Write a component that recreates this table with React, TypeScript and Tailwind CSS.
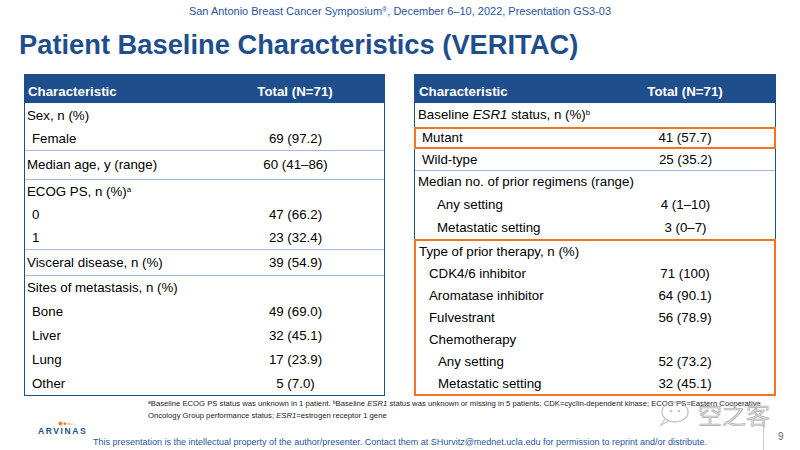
import type { ReactNode } from 'react'

type Row = { label: ReactNode; value?: string; h: string; pl: string }

function TableRow({ row, mr }: { row: Row; mr: string }) {
  return (
    <div className={`flex items-center ${row.h}`}>
      <div className={`flex-1 whitespace-nowrap ${row.pl}`}>{row.label}</div>
      <div className={`w-[120px] text-center ${mr}`}>{row.value}</div>
    </div>
  )
}

function Header({ mr, pl }: { mr: string; pl: string }) {
  return (
    <div className="flex h-[29px] items-center bg-[#1f4e8c] pt-[6px] font-bold text-white">
      <div className={`flex-1 ${pl}`}>Characteristic</div>
      <div className={`w-[120px] text-center ${mr}`}>Total (N=71)</div>
    </div>
  )
}

const leftGroups: Row[][] = [
  [
    { label: 'Sex, n (%)', h: 'h-[25px]', pl: 'pl-[2px]' },
    { label: 'Female', value: '69 (97.2)', h: 'h-[22px]', pl: 'pl-[7px]' },
  ],
  [{ label: 'Median age, y (range)', value: '60 (41–86)', h: 'h-[28px]', pl: 'pl-[2px]' }],
  [
    {
      label: (
        <>
          ECOG PS, n (%)<sup className="text-[8px]">a</sup>
        </>
      ),
      h: 'h-[23px]',
      pl: 'pl-[2px]',
    },
    { label: '0', value: '47 (66.2)', h: 'h-[24px]', pl: 'pl-[7px]' },
    { label: '1', value: '23 (32.4)', h: 'h-[22px]', pl: 'pl-[7px]' },
  ],
  [{ label: 'Visceral disease, n (%)', value: '39 (54.9)', h: 'h-[25px]', pl: 'pl-[2px]' }],
  [
    { label: 'Sites of metastasis, n (%)', h: 'h-[24px]', pl: 'pl-[2px]' },
    { label: 'Bone', value: '49 (69.0)', h: 'h-[24px]', pl: 'pl-[7px]' },
    { label: 'Liver', value: '32 (45.1)', h: 'h-[24px]', pl: 'pl-[7px]' },
    { label: 'Lung', value: '17 (23.9)', h: 'h-[24px]', pl: 'pl-[7px]' },
    { label: 'Other', value: '5 (7.0)', h: 'h-[23px]', pl: 'pl-[7px]' },
  ],
]

const mutant: Row = { label: 'Mutant', value: '41 (57.7)', h: 'h-[18px]', pl: 'pl-[6px]' }

const regimens: Row[] = [
  { label: 'Median no. of prior regimens (range)', h: 'h-[22px]', pl: 'pl-[3px]' },
  { label: 'Any setting', value: '4 (1–10)', h: 'h-[23px]', pl: 'pl-[22px]' },
  { label: 'Metastatic setting', value: '3 (0–7)', h: 'h-[23px]', pl: 'pl-[22px]' },
]

const therapy: Row[] = [
  { label: 'Type of prior therapy, n (%)', h: 'h-[22px]', pl: 'pl-[3px]' },
  { label: 'CDK4/6 inhibitor', value: '71 (100)', h: 'h-[22px]', pl: 'pl-[13px]' },
  { label: 'Aromatase inhibitor', value: '64 (90.1)', h: 'h-[22px]', pl: 'pl-[13px]' },
  { label: 'Fulvestrant', value: '56 (78.9)', h: 'h-[22px]', pl: 'pl-[13px]' },
  { label: 'Chemotherapy', h: 'h-[22px]', pl: 'pl-[13px]' },
  { label: 'Any setting', value: '52 (73.2)', h: 'h-[22px]', pl: 'pl-[22px]' },
  { label: 'Metastatic setting', value: '32 (45.1)', h: 'h-[21px]', pl: 'pl-[22px]' },
]

function ArvinasLogo() {
  return (
    <div className="flex flex-col items-start">
      <svg width="50" height="5" viewBox="0 0 50 5">
        <circle cx="22.5" cy="2.5" r="1.9" fill="#f47b20" />
        <circle cx="26.8" cy="2.7" r="1.4" fill="#f47b20" />
        <circle cx="30.6" cy="2.9" r="1.1" fill="#f7a15e" />
        <circle cx="33.9" cy="3.1" r="0.8" fill="#f7a15e" />
        <circle cx="36.9" cy="3.2" r="0.6" fill="#f9b989" />
      </svg>
      <div className="mt-[1px] text-[8.5px] leading-[9px] font-semibold tracking-[1.6px] text-[#1f4e8c]">
        ARVINAS
      </div>
    </div>
  )
}

export default function App() {
  return (
    <div className="relative h-[450px] w-[800px] overflow-hidden bg-white font-['Liberation_Sans',Arial,sans-serif] text-black">
      <div className="h-[22px] pt-[5px] text-center text-[11px] leading-[13px] text-[#2a54a0]">
        San Antonio Breast Cancer Symposium<sup className="text-[7px]">®</sup>, December 6–10, 2022,
        Presentation GS3-03
      </div>
      <h1 className="mt-[8px] pl-[19px] text-[27.3px] leading-[30px] font-bold text-[#1f4e8c]">
        Patient Baseline Characteristics (VERITAC)
      </h1>

      <div className="mt-[14px] flex gap-[29px] pl-[24px] text-[13.3px] leading-[16px]">
        {/* left table */}
        <div className="w-[361px]">
          <Header pl="pl-[4px]" mr="mr-[30px]" />
          <div className="border-x-[1.5px] border-b-[1.5px] border-[#1f4e8c]">
            {leftGroups.map((group, i) => (
              <div key={i} className={i > 0 ? 'border-t border-[#a7badb]' : ''}>
                {group.map((row, j) => (
                  <TableRow key={j} row={row} mr="mr-[28.5px]" />
                ))}
              </div>
            ))}
          </div>
        </div>

        {/* right table */}
        <div className="w-[362px]">
          <Header pl="pl-[5px]" mr="mr-[31px]" />
          <div className="border-x-[1.5px] border-[#1f4e8c]">
            <TableRow
              row={{
                label: (
                  <>
                    Baseline <i>ESR1</i> status, n (%)<sup className="text-[8px]">b</sup>
                  </>
                ),
                h: 'h-[24px]',
                pl: 'pl-[3px]',
              }}
              mr="mr-[29.5px]"
            />
          </div>
          <div className="border-2 border-[#f47321]">
            <TableRow row={mutant} mr="mr-[29px]" />
          </div>
          <div className="border-x-[1.5px] border-[#1f4e8c]">
            <TableRow row={{ label: 'Wild-type', value: '25 (35.2)', h: 'h-[21px]', pl: 'pl-[7px]' }} mr="mr-[29.5px]" />
            <div className="border-t border-[#a7badb]">
              {regimens.map((row, j) => (
                <TableRow key={j} row={row} mr="mr-[29.5px]" />
              ))}
            </div>
          </div>
          <div className="border-2 border-[#f47321]">
            {therapy.map((row, j) => (
              <TableRow key={j} row={row} mr="mr-[29px]" />
            ))}
          </div>
        </div>
      </div>

      <div className="flex">
        <div className="flex-1">
          <div className="flex h-[40px]">
            <div className="w-[148px] pt-[25px] pl-[38px]">
              <ArvinasLogo />
            </div>
            <div className="pt-[2px] text-[7.7px] leading-[12px] whitespace-nowrap text-[#222]">
              <div>
                <sup className="text-[5px]">a</sup>Baseline ECOG PS status was unknown in 1 patient.{' '}
                <sup className="text-[5px]">b</sup>Baseline <i>ESR1</i> status was unknown or missing in 5 patients;
                CDK=cyclin-dependent kinase; ECOG PS=Eastern Cooperative
              </div>
              <div>
                Oncology Group performance status; <i>ESR1</i>=estrogen receptor 1 gene
              </div>
            </div>
          </div>
          <div className="pl-[37px] text-center text-[9px] leading-[12px] whitespace-nowrap text-[#2a54a0]">
            This presentation is the intellectual property of the author/presenter. Contact them at
            SHurvitz@mednet.ucla.edu for permission to reprint and/or distribute.
          </div>
        </div>
        <div className="mt-[27px] h-[27px] w-[37px] border-l border-[#c8c8c8] pt-[8px] pl-[14px] text-[10px] leading-[12px] text-[#666]">
          9
        </div>
      </div>

      {/* watermark */}
      <div className="pointer-events-none absolute top-[398px] left-[656px] flex items-center gap-[6px] opacity-80">
        <svg width="36" height="32" viewBox="0 0 36 32">
          <ellipse cx="19" cy="14" rx="13" ry="10" fill="none" stroke="#b8b8b8" strokeWidth="1.3" />
          <path d="M9 21 L5 27 L13 23" fill="none" stroke="#b8b8b8" strokeWidth="1.3" />
          <circle cx="15" cy="13" r="1.3" fill="#b8b8b8" />
          <circle cx="23" cy="13" r="1.3" fill="#b8b8b8" />
        </svg>
        <span className="font-['Noto_Sans_CJK_SC',sans-serif] text-[24px] leading-[28px] text-[#d4d4d4] [-webkit-text-stroke:0.6px_#9a9a9a]">
          空之客
        </span>
      </div>
    </div>
  )
}
